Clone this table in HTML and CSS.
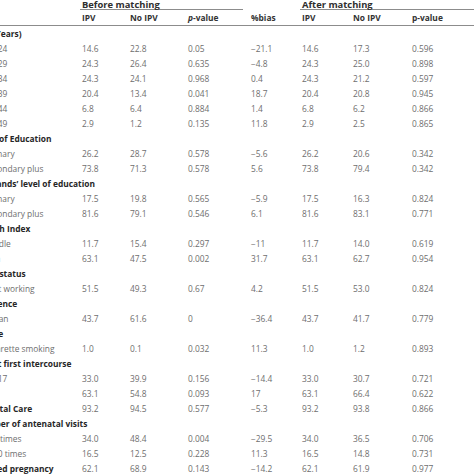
FILE: index.html
```html
<!DOCTYPE html>
<html lang="en">
<head>
<meta charset="utf-8">
<title>Covariate balance before and after matching</title>
<link rel="stylesheet" href="styles.css">
</head>
<body>
<div class="table">
  <div class="row spanners">
    <div class="spanner before">Before matching</div>
    <div class="spanner after">After matching</div>
  </div>
  <div class="row head">
    <div></div>
    <div>IPV</div><div>No IPV</div><div><i>p</i>-value</div><div>%bias</div>
    <div>IPV</div><div>No IPV</div><div>p-value</div>
  </div>

  <div class="row group"><div class="lbl">Age (Years)</div></div>
  <div class="row"><div class="lbl sub">15–24</div><div>14.6</div><div>22.8</div><div>0.05</div><div>−21.1</div><div>14.6</div><div>17.3</div><div>0.596</div></div>
  <div class="row"><div class="lbl sub">25–29</div><div>24.3</div><div>26.4</div><div>0.635</div><div>−4.8</div><div>24.3</div><div>25.0</div><div>0.898</div></div>
  <div class="row"><div class="lbl sub">30–34</div><div>24.3</div><div>24.1</div><div>0.968</div><div>0.4</div><div>24.3</div><div>21.2</div><div>0.597</div></div>
  <div class="row"><div class="lbl sub">35–39</div><div>20.4</div><div>13.4</div><div>0.041</div><div>18.7</div><div>20.4</div><div>20.8</div><div>0.945</div></div>
  <div class="row"><div class="lbl sub">40–44</div><div>6.8</div><div>6.4</div><div>0.884</div><div>1.4</div><div>6.8</div><div>6.2</div><div>0.866</div></div>
  <div class="row"><div class="lbl sub">45–49</div><div>2.9</div><div>1.2</div><div>0.135</div><div>11.8</div><div>2.9</div><div>2.5</div><div>0.865</div></div>

  <div class="row group"><div class="lbl">Level of Education</div></div>
  <div class="row"><div class="lbl sub">Primary</div><div>26.2</div><div>28.7</div><div>0.578</div><div>−5.6</div><div>26.2</div><div>20.6</div><div>0.342</div></div>
  <div class="row"><div class="lbl sub">Secondary plus</div><div>73.8</div><div>71.3</div><div>0.578</div><div>5.6</div><div>73.8</div><div>79.4</div><div>0.342</div></div>

  <div class="row group"><div class="lbl">Husbands’ level of education</div></div>
  <div class="row"><div class="lbl sub">Primary</div><div>17.5</div><div>19.8</div><div>0.565</div><div>−5.9</div><div>17.5</div><div>16.3</div><div>0.824</div></div>
  <div class="row"><div class="lbl sub">Secondary plus</div><div>81.6</div><div>79.1</div><div>0.546</div><div>6.1</div><div>81.6</div><div>83.1</div><div>0.771</div></div>

  <div class="row group"><div class="lbl">Wealth Index</div></div>
  <div class="row"><div class="lbl sub">Middle</div><div>11.7</div><div>15.4</div><div>0.297</div><div>−11</div><div>11.7</div><div>14.0</div><div>0.619</div></div>
  <div class="row"><div class="lbl sub">Rich</div><div>63.1</div><div>47.5</div><div>0.002</div><div>31.7</div><div>63.1</div><div>62.7</div><div>0.954</div></div>

  <div class="row group"><div class="lbl">Work status</div></div>
  <div class="row"><div class="lbl sub near">Not working</div><div>51.5</div><div>49.3</div><div>0.67</div><div>4.2</div><div>51.5</div><div>53.0</div><div>0.824</div></div>

  <div class="row group"><div class="lbl">Residence</div></div>
  <div class="row"><div class="lbl sub">Urban</div><div>43.7</div><div>61.6</div><div>0</div><div>−36.4</div><div>43.7</div><div>41.7</div><div>0.779</div></div>

  <div class="row group"><div class="lbl">Smoke</div></div>
  <div class="row"><div class="lbl sub">Cigarette smoking</div><div>1.0</div><div>0.1</div><div>0.032</div><div>11.3</div><div>1.0</div><div>1.2</div><div>0.893</div></div>

  <div class="row group"><div class="lbl">Age at first intercourse</div></div>
  <div class="row"><div class="lbl sub">15–17</div><div>33.0</div><div>39.9</div><div>0.156</div><div>−14.4</div><div>33.0</div><div>30.7</div><div>0.721</div></div>
  <div class="row"><div class="lbl sub">18+</div><div>63.1</div><div>54.8</div><div>0.093</div><div>17</div><div>63.1</div><div>66.4</div><div>0.622</div></div>

  <div class="row group"><div class="lbl">Prenatal Care</div><div>93.2</div><div>94.5</div><div>0.577</div><div>−5.3</div><div>93.2</div><div>93.8</div><div>0.866</div></div>

  <div class="row group"><div class="lbl">Number of antenatal visits</div></div>
  <div class="row"><div class="lbl sub">1–3 times</div><div>34.0</div><div>48.4</div><div>0.004</div><div>−29.5</div><div>34.0</div><div>36.5</div><div>0.706</div></div>
  <div class="row"><div class="lbl sub">4–10 times</div><div>16.5</div><div>12.5</div><div>0.228</div><div>11.3</div><div>16.5</div><div>14.8</div><div>0.731</div></div>

  <div class="row group"><div class="lbl">Wanted pregnancy</div><div>62.1</div><div>68.9</div><div>0.143</div><div>−14.2</div><div>62.1</div><div>61.9</div><div>0.977</div></div>
</div>
</body>
</html>
```

FILE: styles.css
```css
html, body {
  margin: 0;
  padding: 0;
  background: #ffffff;
  overflow: hidden;
}

body {
  font-family: "Open Sans", "Liberation Sans", sans-serif;
}

.table {
  margin-left: -25px;
  width: 499px;
}

.row {
  display: grid;
  grid-template-columns: 107px 48px 58px 63px 51px 51px 59px 1fr;
  height: 15px;
  line-height: 15px;
  font-size: 8.4px;
  color: #6e6e6e;
  white-space: nowrap;
}

.spanners {
  height: 10px;
  line-height: 9px;
  font-size: 9.4px;
  font-weight: 700;
  color: #2e2e2e;
}

.spanner {
  border-bottom: 1px solid #8c8c8c;
}

.before {
  grid-column: 2 / 5;
  margin-left: -2px;
  padding-left: 2px;
  margin-right: 8px;
}

.after {
  grid-column: 6 / 9;
  margin-left: -2px;
  padding-left: 2px;
}

.head {
  height: 15px;
  border-bottom: 1px solid #8c8c8c;
  font-weight: 700;
  color: #333333;
}

.group .lbl {
  font-weight: 700;
  color: #262626;
}

.lbl.sub {
  padding-left: 9px;
}

.lbl.sub.near {
  padding-left: 12px;
}
```
